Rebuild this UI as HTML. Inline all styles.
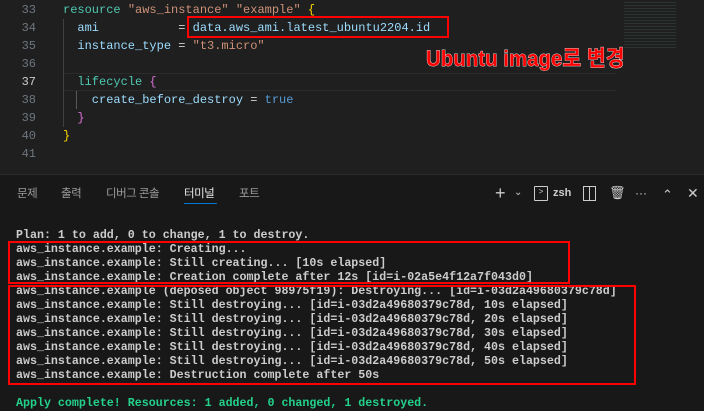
<!DOCTYPE html>
<html><head><meta charset="utf-8"><style>
body{margin:0;width:704px;height:411px;background:#181818;overflow:hidden;position:relative;font-family:"Liberation Mono",monospace}
.ed{position:absolute;left:0;top:0;width:704px;height:175px;background:#1f1f1f}
.ln{position:absolute;left:0;width:36px;text-align:right;color:#6e7681;font-size:12px;line-height:18px}
.cd{position:absolute;left:63px;font-size:12px;color:#9cdcfe;white-space:pre;line-height:18px}
.t{position:absolute;left:16px;font-size:11.65px;font-weight:bold;color:#cccccc;white-space:pre;line-height:14px}
.kw{color:#4ec9b0}.st{color:#ce9178}.br{color:#ffd700}.pk{color:#da70d6}.op{color:#d4d4d4}.bl{color:#569cd6}
.tab{position:absolute;top:185px;font-family:"Liberation Sans","Noto Sans CJK KR",sans-serif;font-size:11.5px;letter-spacing:-0.5px;color:#9d9d9d}
.box{position:absolute;border:2px solid #f00}
.ic{position:absolute;color:#ccc;font-family:"Liberation Sans",sans-serif}
</style></head><body>
<div class="ed"></div>
<div style="position:absolute;left:0;top:174px;width:704px;height:1px;background:#2b2b2b"></div>
<div style="position:absolute;left:64px;top:73px;width:553px;height:16px;border-top:1px solid #2a2a2a;border-bottom:1px solid #2a2a2a"></div>
<div style="position:absolute;left:63px;top:19px;width:1px;height:108px;background:#404040"></div>
<div style="position:absolute;left:76px;top:91px;width:1px;height:18px;background:#585858"></div>
<div class="ln" style="top:1px">33</div><div class="ln" style="top:19px">34</div><div class="ln" style="top:37px">35</div><div class="ln" style="top:55px">36</div><div class="ln" style="top:73px;color:#ccc">37</div><div class="ln" style="top:91px">38</div><div class="ln" style="top:109px">39</div><div class="ln" style="top:127px">40</div><div class="ln" style="top:145px">41</div>
<div class="cd" style="top:1px"><span class="kw">resource</span> <span class="st">"aws_instance"</span> <span class="st">"example"</span> <span class="br">{</span></div>
<div class="cd" style="top:19px">  ami           <span class="op">=</span> data.aws_ami.latest_ubuntu2204.id</div>
<div class="cd" style="top:37px">  instance_type <span class="op">=</span> <span class="st">"t3.micro"</span></div>
<div class="cd" style="top:73px">  <span class="kw">lifecycle</span> <span class="pk">{</span></div>
<div class="cd" style="top:91px">    create_before_destroy <span class="op">=</span> <span class="bl">true</span></div>
<div class="cd" style="top:109px">  <span class="pk">}</span></div>
<div class="cd" style="top:127px"><span class="br">}</span></div>
<div class="box" style="left:187px;top:16px;width:258px;height:18px"></div>
<div style="position:absolute;left:426px;top:41px;font-family:'Liberation Sans','Noto Sans CJK KR',sans-serif;font-weight:bold;font-size:22px;color:#f00;white-space:nowrap;transform:scaleX(.93);transform-origin:left;-webkit-text-stroke:0.7px #fff;paint-order:stroke fill">Ubuntu image로 변경</div>
<div style="position:absolute;left:624px;top:0;width:52px;height:50px;opacity:.3;background:repeating-linear-gradient(#1f1f1f 0 2px,#4a6a5a 2px 3px)"></div>
<div class="tab" style="left:17px">문제</div><div class="tab" style="left:61px">출력</div><div class="tab" style="left:106px">디버그 콘솔</div><div class="tab" style="left:184px;color:#e7e7e7">터미널</div><div class="tab" style="left:239px">포트</div>
<div style="position:absolute;left:184px;top:203px;width:33px;height:1px;background:#0078d4"></div>
<div class="ic" style="left:495px;top:183px;font-size:18px">+</div>
<div class="ic" style="left:514px;top:187px;font-size:10px">⌄</div>
<div style="position:absolute;left:534px;top:186px;width:12px;height:13px;border:1px solid #ccc;border-radius:1px;color:#ccc;font-size:8px;line-height:12px;text-align:center">&gt;</div>
<div class="ic" style="left:553px;top:187px;font-size:11px;font-weight:bold">zsh</div>
<div style="position:absolute;left:583px;top:186px;width:11px;height:13px;border:1px solid #ccc"></div>
<div style="position:absolute;left:589px;top:186px;width:1px;height:14px;background:#ccc"></div>
<div class="ic" style="left:609px;top:185px;font-size:13px">🗑</div>
<div class="ic" style="left:635px;top:186px;font-size:12px">···</div>
<div class="ic" style="left:662px;top:187px;font-size:13px">⌃</div>
<div class="ic" style="left:687px;top:185px;font-size:14px">✕</div>
<div class="t" style="top:229px">Plan: 1 to add, 0 to change, 1 to destroy.</div>
<div class="t" style="top:243px">aws_instance.example: Creating...</div>
<div class="t" style="top:257px">aws_instance.example: Still creating... [10s elapsed]</div>
<div class="t" style="top:271px">aws_instance.example: Creation complete after 12s [id=i-02a5e4f12a7f043d0]</div>
<div class="t" style="top:285px">aws_instance.example (deposed object 98975f19): Destroying... [id=i-03d2a49680379c78d]</div>
<div class="t" style="top:299px">aws_instance.example: Still destroying... [id=i-03d2a49680379c78d, 10s elapsed]</div>
<div class="t" style="top:313px">aws_instance.example: Still destroying... [id=i-03d2a49680379c78d, 20s elapsed]</div>
<div class="t" style="top:327px">aws_instance.example: Still destroying... [id=i-03d2a49680379c78d, 30s elapsed]</div>
<div class="t" style="top:341px">aws_instance.example: Still destroying... [id=i-03d2a49680379c78d, 40s elapsed]</div>
<div class="t" style="top:355px">aws_instance.example: Still destroying... [id=i-03d2a49680379c78d, 50s elapsed]</div>
<div class="t" style="top:369px">aws_instance.example: Destruction complete after 50s</div>
<div class="t" style="top:397px;color:#23d18b">Apply complete! Resources: 1 added, 0 changed, 1 destroyed.</div>
<div class="box" style="left:8px;top:241px;width:558px;height:39px"></div>
<div class="box" style="left:8px;top:285px;width:624px;height:96px"></div>
</body></html>
